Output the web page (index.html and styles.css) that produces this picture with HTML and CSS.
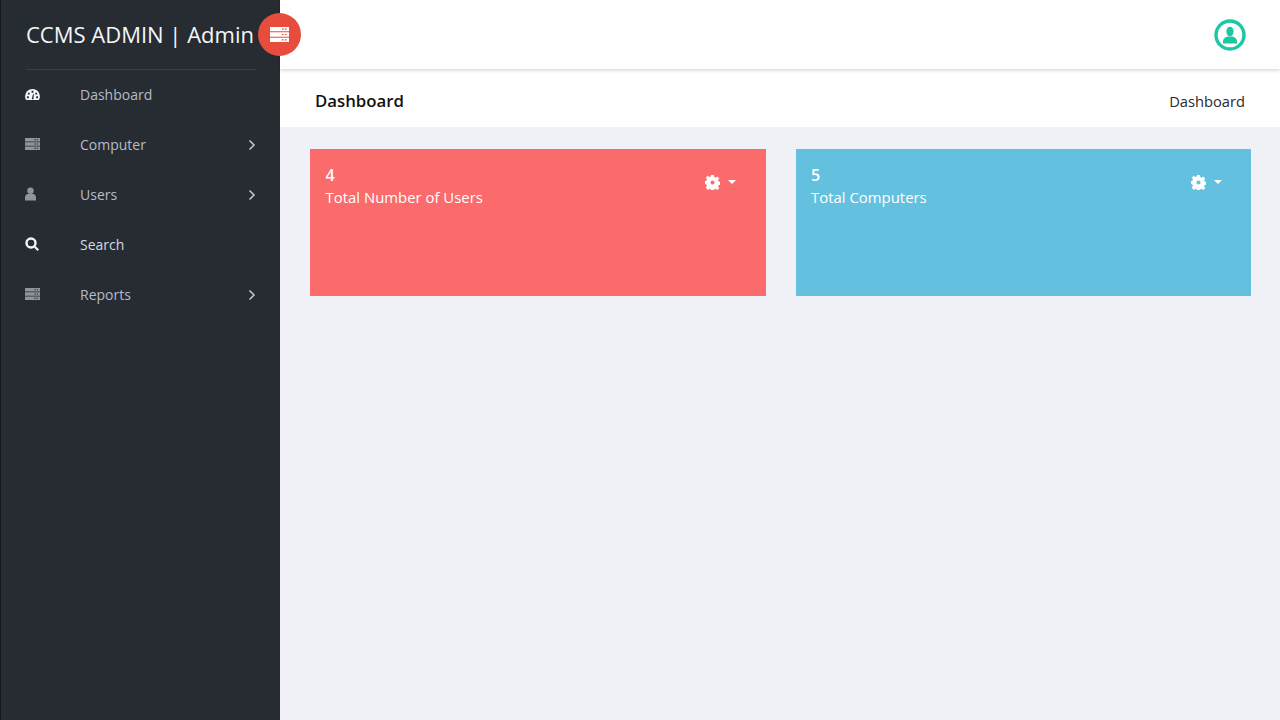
FILE: index.html
```html
<!DOCTYPE html>
<html lang="en">
<head>
    <meta charset="UTF-8">
    <title>CCMS Admin | Dashboard</title>
    <link rel="stylesheet" href="styles.css">
</head>
<body>
    <svg class="icon-defs" width="0" height="0">
        <symbol id="i-server" viewBox="0 0 16 14" preserveAspectRatio="none">
            <path fill-rule="evenodd" d="M0 0h16v4H0zM10 1.500v1h1.500v-1zM12.500 1.500v1H14v-1zM0 5h16v4H0zM10 6.500v1h1.500v-1zM12.500 6.500v1H14v-1zM0 10h16v4H0zM10 11.500v1h1.500v-1zM12.500 11.500v1H14v-1z"/>
        </symbol>
        <symbol id="i-chevron" viewBox="0 0 8 12">
            <path d="M1.500 1.500 6 6l-4.500 4.500" fill="none" stroke="currentColor" stroke-width="1.500"/>
        </symbol>
        <symbol id="i-gear" viewBox="0 0 16 16">
            <path fill-rule="evenodd" d="M6.500 0h3l.4 2.200 1.300.6 1.900-1.300 2.100 2.100-1.300 1.900.6 1.300 2.200.4v3l-2.200.4-.6 1.300 1.300 1.900-2.100 2.100-1.900-1.300-1.300.6-.4 2.200h-3l-.4-2.200-1.300-.6-1.900 1.300L.8 13.300l1.300-1.900-.6-1.300L0 9.500v-3l1.500-.4.600-1.300L.8 2.900 2.900.8l1.900 1.300 1.300-.6zM8 5.800a2.200 2.200 0 1 0 0 4.400 2.200 2.200 0 0 0 0-4.400z"/>
        </symbol>
    </svg>

    <div class="app">
        <aside class="sidebar">
            <div class="brand"><span class="brand-text">CCMS ADMIN | Admin</span></div>
            <nav class="side-nav">
                <a class="nav-item">
                    <span class="nav-icon nav-icon-light">
                        <svg width="15" height="13" viewBox="0 0 16 14"><path fill-rule="evenodd" d="M8 1a8 8 0 0 1 8 8c0 1.600-.5 3-1.200 4H1.200C.5 12 0 10.600 0 9a8 8 0 0 1 8-8zM7 3v2h2V3zM3 5v2h2V5zM11 5v2h2V5zM2 9v2h2V9zM12 9v2h2V9zM7.200 12h1.800l.5-5.500-1 .1z"/></svg>
                    </span>
                    <span class="nav-label">Dashboard</span>
                </a>
                <a class="nav-item">
                    <span class="nav-icon"><svg width="15" height="12"><use href="#i-server"/></svg></span>
                    <span class="nav-label">Computer</span>
                    <svg class="nav-arrow" width="8" height="12"><use href="#i-chevron"/></svg>
                </a>
                <a class="nav-item">
                    <span class="nav-icon">
                        <svg width="11" height="14" viewBox="0 0 12 14"><circle cx="6" cy="3.500" r="3.500"/><path d="M0 14V10.500C0 8.500 1.500 7 3 7h6c1.500 0 3 1.500 3 3.500V14z"/></svg>
                    </span>
                    <span class="nav-label">Users</span>
                    <svg class="nav-arrow" width="8" height="12"><use href="#i-chevron"/></svg>
                </a>
                <a class="nav-item">
                    <span class="nav-icon nav-icon-light">
                        <svg width="14" height="14" viewBox="0 0 14 14"><circle cx="6" cy="6" r="4.500" fill="none" stroke="currentColor" stroke-width="2.400"/><path d="M9 10.500 10.500 9l3.500 3.500-1.500 1.500z"/></svg>
                    </span>
                    <span class="nav-label nav-label-light">Search</span>
                </a>
                <a class="nav-item">
                    <span class="nav-icon"><svg width="15" height="12"><use href="#i-server"/></svg></span>
                    <span class="nav-label">Reports</span>
                    <svg class="nav-arrow" width="8" height="12"><use href="#i-chevron"/></svg>
                </a>
            </nav>
        </aside>

        <button class="menu-toggle">
            <svg width="19" height="15"><use href="#i-server"/></svg>
        </button>

        <div class="main">
            <header class="topbar">
                <svg class="user-icon" width="32" height="32" viewBox="0 0 32 32">
                    <circle cx="16" cy="16" r="14" fill="none" stroke="#1cc8a4" stroke-width="3.400"/>
                    <ellipse cx="16" cy="12.500" rx="3.600" ry="4.800" fill="#1cc8a4"/>
                    <path d="M9 24.500v-2.500c0-2.500 2-3.500 4.500-4.500h5c2.500 1 4.500 2 4.500 4.500v2.500z" fill="#1cc8a4"/>
                </svg>
            </header>
            <div class="page-title">
                <h1>Dashboard</h1>
                <span class="crumb">Dashboard</span>
            </div>
            <main class="content">
                <section class="stat-card stat-red">
                    <div class="stat-text">
                        <div class="stat-number">4</div>
                        <div class="stat-label">Total Number of Users</div>
                    </div>
                    <div class="stat-menu">
                        <svg width="15" height="15"><use href="#i-gear"/></svg>
                        <span class="caret"></span>
                    </div>
                </section>
                <section class="stat-card stat-blue">
                    <div class="stat-text">
                        <div class="stat-number">5</div>
                        <div class="stat-label">Total Computers</div>
                    </div>
                    <div class="stat-menu">
                        <svg width="15" height="15"><use href="#i-gear"/></svg>
                        <span class="caret"></span>
                    </div>
                </section>
            </main>
        </div>
    </div>
</body>
</html>
```
FILE: styles.css
```css
body {
    margin: 0;
    font-family: 'Open Sans', sans-serif;
    background-color: #eff1f6;
}

.icon-defs {
    position: absolute;
}

.app {
    display: flex;
    height: 720px;
    position: relative;
    overflow: hidden;
}

/* --- Sidebar --- */
.sidebar {
    width: 280px;
    flex-shrink: 0;
    box-sizing: border-box;
    background-color: #272b32;
    border-left: 1px solid #15181d;
}

.brand {
    height: 67px;
    padding-bottom: 2px;
    margin: 0 24px 0 25px;
    border-bottom: 1px solid #3a3f48;
    display: flex;
    align-items: center;
}

.brand-text {
    font-size: 22px;
    color: #f4f6f8;
    white-space: nowrap;
}

.nav-item {
    height: 50px;
    box-sizing: border-box;
    padding: 0 24px 2px 24px;
    display: flex;
    align-items: center;
}

.nav-icon {
    width: 55px;
    display: flex;
    align-items: center;
    color: #8f959c;
    fill: currentColor;
}

.nav-icon-light {
    color: #f4f6f8;
}

.nav-label {
    flex: 1;
    font-size: 14px;
    color: #b4bcc8;
}

.nav-label-light {
    color: #d5dae2;
}

.nav-arrow {
    margin-top: 2px;
    color: #c4cad3;
}

/* sits over the sidebar edge */
.menu-toggle {
    position: absolute;
    z-index: 2;
    left: 258px;
    top: 13px;
    width: 43px;
    height: 43px;
    padding: 0;
    border: 0;
    border-radius: 50%;
    background-color: #e74c3c;
    fill: #fff;
    display: flex;
    align-items: center;
    justify-content: center;
}

/* --- Main area --- */
.main {
    flex: 1;
    min-width: 0;
}

.topbar {
    height: 69px;
    background-color: #fff;
    box-shadow: 0 1px 4px rgba(0, 0, 0, 0.2);
    display: flex;
    align-items: center;
    justify-content: flex-end;
    padding-right: 34px;
    position: relative;
}

.page-title {
    height: 58px;
    box-sizing: border-box;
    background-color: #fff;
    display: flex;
    align-items: center;
    justify-content: space-between;
    padding: 5px 35px 0 35px;
}

.page-title h1 {
    margin: 0;
    font-size: 16.800px;
    font-weight: 600;
    color: #111;
}

.crumb {
    font-size: 14.700px;
    color: #2a2a2a;
}

.content {
    display: flex;
    gap: 30px;
    padding: 22px 29px 0 30px;
}

.stat-card {
    flex: 1;
    height: 147px;
    box-sizing: border-box;
    padding: 16px 16px 16px 15.600px;
    display: flex;
    justify-content: space-between;
    color: #fff;
}

.stat-red {
    background-color: #fb6b6b;
}

.stat-blue {
    background-color: #63c1df;
}

.stat-number {
    font-size: 16px;
    font-weight: 600;
    line-height: 20px;
}

.stat-label {
    font-size: 14.900px;
    line-height: 24px;
}

.stat-menu {
    display: flex;
    align-items: center;
    gap: 8px;
    height: 15px;
    margin: 10px 13.500px 0 0;
    fill: #fff;
}

.caret {
    width: 0;
    height: 0;
    margin-bottom: 2px;
    border-left: 4.500px solid transparent;
    border-right: 4.500px solid transparent;
    border-top: 4.500px solid #fff;
}
```
